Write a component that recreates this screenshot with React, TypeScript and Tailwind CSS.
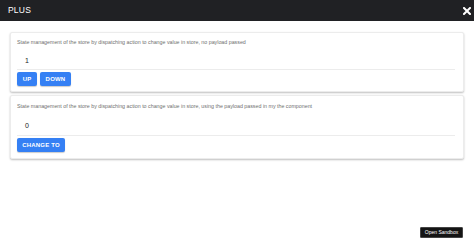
import React, { useState } from 'react';

// Small counter demo: one card uses actions with no payload, the other passes one
function CounterCard({
  text,
  value,
  roomy,
  children,
}: {
  text: string;
  value: number;
  roomy?: boolean;
  children: React.ReactNode;
}) {
  return (
    <div
      className={`bg-white rounded-[2px] border border-[#ececec] shadow-[0_1px_2px_rgba(0,0,0,0.25)] pl-[6px] pr-[7px] ${
        roomy ? 'pt-[7px] pb-[6px]' : 'pt-[6px] pb-[5px]'
      }`}
    >
      <div className="border-b border-[#ececec] mr-[1px]">
        <p className="text-[5.3px] leading-[7px] text-[#707070]">{text}</p>
        <div
          className={`pl-[8px] text-[7px] leading-[9px] text-[#222] ${
            roomy ? 'pt-[11px] pb-[5px]' : 'pt-[10px] pb-[4px]'
          }`}
        >
          {value}
        </div>
      </div>
      <div className={`flex gap-[3px] ${roomy ? 'pt-[2px]' : 'pt-[2px]'}`}>{children}</div>
    </div>
  );
}

function Btn({ label, onClick, w }: { label: string; onClick: () => void; w: string }) {
  return (
    <button
      onClick={onClick}
      className={`${w} h-[14px] rounded-[2px] bg-[#3580f4] text-white text-[6px] font-semibold tracking-[0.2px] uppercase flex items-center justify-center shadow-[0_1px_1px_rgba(0,0,0,0.2)]`}
    >
      {label}
    </button>
  );
}

export default function App() {
  const [count, setCount] = useState(1);
  const [other, setOther] = useState(0);

  return (
    <div className="w-[474px] h-[248px] bg-white flex flex-col font-['Liberation_Sans',Arial,sans-serif] relative overflow-hidden">
      <header className="h-[21px] bg-[#202124] flex items-center justify-between pl-[8px] pr-[3px]">
        <span className="text-white text-[8.5px] font-normal tracking-[0.2px]">PLUS</span>
        <svg width="8" height="8" viewBox="0 0 8 8">
          <path d="M1 1 L7 7 M7 1 L1 7" stroke="white" strokeWidth="2" strokeLinecap="square" />
        </svg>
      </header>

      <main className="flex flex-col gap-[3px] px-[10px] pt-[11px]">
        <CounterCard
          text="State management of the store by dispatching action to change value in store, no payload passed"
          value={count}
        >
          <Btn label="UP" w="w-[20px]" onClick={() => setCount(count + 1)} />
          <Btn label="DOWN" w="w-[31px]" onClick={() => setCount(count - 1)} />
        </CounterCard>

        <CounterCard
          text="State management of the store by dispatching action to change value in store, using the payload passed in my the component"
          value={other}
          roomy
        >
          <Btn label="Change to" w="w-[48px]" onClick={() => setOther(other + 5)} />
        </CounterCard>
      </main>

      <button className="absolute right-[11px] bottom-[10px] w-[43px] h-[11px] bg-[#141414] rounded-[1px] text-white text-[5px] border border-[#444] flex items-center justify-center">
        Open Sandbox
      </button>
    </div>
  );
}
